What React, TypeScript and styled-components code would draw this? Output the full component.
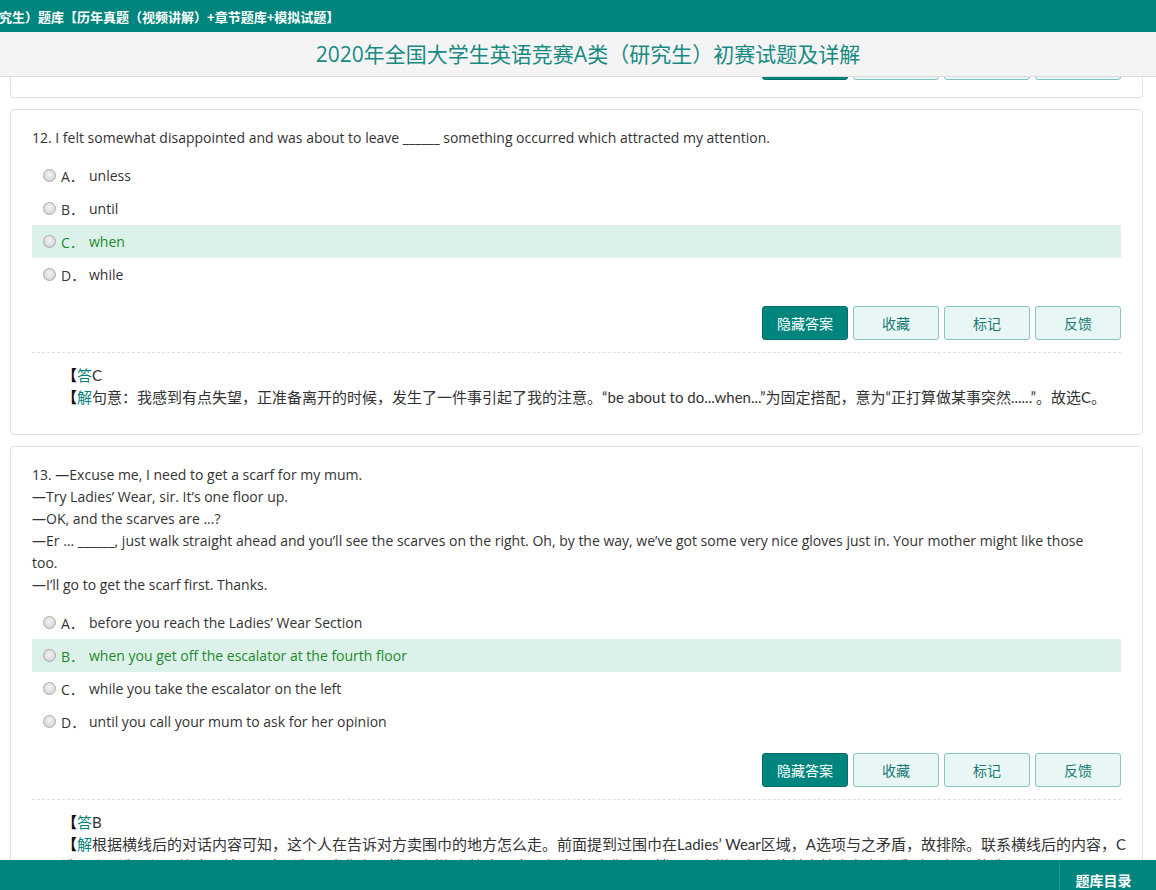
import React from "react"
import styled, { createGlobalStyle } from "styled-components"

const GlobalStyle = createGlobalStyle`
  html, body {
    margin: 0;
    padding: 0;
    background: #fff;
  }
  body {
    font-family: "Open Sans", "Noto Sans CJK SC", sans-serif;
    font-size: 14px;
    color: #333;
  }
`

interface Option {
  key: string
  text: string
}

interface Question {
  id: number
  lines: string[]
  options: Option[]
  answer: string
  analysis: string
}

const questions: Question[] = [
  {
    id: 12,
    lines: [
      "12. I felt somewhat disappointed and was about to leave ______ something occurred which attracted my attention.",
    ],
    options: [
      { key: "A", text: "unless" },
      { key: "B", text: "until" },
      { key: "C", text: "when" },
      { key: "D", text: "while" },
    ],
    answer: "C",
    analysis:
      "句意：我感到有点失望，正准备离开的时候，发生了一件事引起了我的注意。“be about to do...when...”为固定搭配，意为“正打算做某事突然......”。故选C。",
  },
  {
    id: 13,
    lines: [
      "13. —Excuse me, I need to get a scarf for my mum.",
      "—Try Ladies’ Wear, sir. It’s one floor up.",
      "—OK, and the scarves are ...?",
      "—Er ... ______, just walk straight ahead and you’ll see the scarves on the right. Oh, by the way, we’ve got some very nice gloves just in. Your mother might like those too.",
      "—I’ll go to get the scarf first. Thanks.",
    ],
    options: [
      { key: "A", text: "before you reach the Ladies’ Wear Section" },
      { key: "B", text: "when you get off the escalator at the fourth floor" },
      { key: "C", text: "while you take the escalator on the left" },
      { key: "D", text: "until you call your mum to ask for her opinion" },
    ],
    answer: "B",
    analysis:
      "根据横线后的对话内容可知，这个人在告诉对方卖围巾的地方怎么走。前面提到过围巾在Ladies’ Wear区域，A选项与之矛盾，故排除。联系横线后的内容，C选项和D选项都不符合语境，只有B选项“当你在四楼下电梯时”符合题意，句意为“当你在四楼下了电梯，径直往前走就会在右边看到围巾”。故选B。",
  },
]

const ActionButtons: React.FunctionComponent = () => (
  <ButtonRow>
    <ActionButton $primary>隐藏答案</ActionButton>
    <ActionButton>收藏</ActionButton>
    <ActionButton>标记</ActionButton>
    <ActionButton>反馈</ActionButton>
  </ButtonRow>
)

const QuestionCard: React.FunctionComponent<{ q: Question }> = ({ q }) => (
  <Card>
    <Stem>
      {q.lines.map((line, i) => (
        <div key={i}>{line}</div>
      ))}
    </Stem>
    <Options>
      {q.options.map((o) => (
        <OptionRow key={o.key} $correct={o.key === q.answer}>
          <Radio />
          <OptionKey>{o.key}．</OptionKey>
          <span>{o.text}</span>
        </OptionRow>
      ))}
    </Options>
    <ActionButtons />
    <Divider />
    <AnswerBox>
      <div>
        <Mark>【</Mark>
        <MarkLabel>答</MarkLabel>
        {q.answer}
      </div>
      <div>
        <Mark>【</Mark>
        <MarkLabel>解</MarkLabel>
        {q.analysis}
      </div>
    </AnswerBox>
  </Card>
)

const App: React.FunctionComponent = () => (
  <>
    <GlobalStyle />
    <Header>
      <TopBar>
        <TopTitle>究生）题库【历年真题（视频讲解）+章节题库+模拟试题】</TopTitle>
      </TopBar>
      <SubBar>2020年全国大学生英语竞赛A类（研究生）初赛试题及详解</SubBar>
    </Header>
    <List>
      <TailCard>
        <ActionButtons />
      </TailCard>
      {questions.map((q) => (
        <QuestionCard key={q.id} q={q} />
      ))}
    </List>
    <Footer>
      <FooterButton>题库目录</FooterButton>
    </Footer>
  </>
)

const Header = styled.header`
  position: fixed;
  top: 0;
  left: 0;
  right: 0;
  z-index: 10;
`

const TopBar = styled.div`
  height: 32px;
  background: #00857e;
  overflow: hidden;
  display: flex;
  align-items: center;
`

const TopTitle = styled.div`
  margin-left: -1px;
  color: #fff;
  font-size: 13px;
  font-weight: bold;
  white-space: nowrap;
  font-family: "Noto Sans CJK SC", sans-serif;
`

const SubBar = styled.div`
  height: 44px;
  padding-left: 20px;
  background: #f4f4f4;
  border-bottom: 1px solid #dcdcdc;
  color: #168a83;
  font-size: 21px;
  line-height: 44px;
  text-align: center;
`

const List = styled.main`
  display: flex;
  flex-direction: column;
  gap: 11px;
  padding: 46px 13px 60px 10px;
`

const Card = styled.section`
  border: 1px solid #e2e2e2;
  border-radius: 4px;
  padding: 17px 21px 26px;
  background: #fff;
`

const TailCard = styled(Card)`
  padding-top: 0;
  padding-bottom: 17px;
  border-top: none;
  border-radius: 0 0 4px 4px;
`

const Stem = styled.div`
  line-height: 22px;
  padding-right: 12px;
`

const Options = styled.div`
  margin: 10px 0 15px;
`

const OptionRow = styled.div<{ $correct?: boolean }>`
  height: 33px;
  display: flex;
  align-items: center;
  padding-left: 11px;
  background: ${(p) => (p.$correct ? "#dcf1ea" : "transparent")};
  color: ${(p) => (p.$correct ? "#1f8a2b" : "#333")};
`

const Radio = styled.span`
  width: 11px;
  height: 11px;
  border-radius: 50%;
  border: 1px solid #a9a9a9;
  background: radial-gradient(circle at 50% 40%, #f4f4f4 0%, #d8d8d8 70%, #c4c4c4 100%);
  margin-right: 5px;
  flex: none;
`

const OptionKey = styled.span`
  width: 28px;
  flex: none;
`

const ButtonRow = styled.div`
  display: flex;
  justify-content: flex-end;
  gap: 5px;
`

const ActionButton = styled.button<{ $primary?: boolean }>`
  width: 86px;
  height: 34px;
  border-radius: 3px;
  font-family: "Noto Sans CJK SC", sans-serif;
  font-size: 14px;
  cursor: pointer;
  border: 1px solid ${(p) => (p.$primary ? "#006f69" : "#86c4c0")};
  background: ${(p) => (p.$primary ? "#00857e" : "#e8f6f5")};
  color: ${(p) => (p.$primary ? "#fff" : "#1b7a75")};
`

const Divider = styled.hr`
  margin: 12px 0 0;
  border: none;
  border-top: 1px dashed #e0e0e0;
`

const AnswerBox = styled.div`
  padding: 11px 0 0 30px;
  margin-right: -8px;
  line-height: 22px;
  font-size: 15px;
  font-family: "Lato", "Noto Sans CJK SC", sans-serif;
`

const Mark = styled.span`
  color: #111;
  font-weight: 900;
`

const MarkLabel = styled.span`
  color: #00807a;
`

const Footer = styled.footer`
  position: fixed;
  left: 0;
  right: 0;
  bottom: 0;
  height: 30px;
  background: #00857e;
  display: flex;
  justify-content: flex-end;
  z-index: 10;
`

const FooterButton = styled.div`
  width: 87px;
  margin-right: 9px;
  border-left: 1px solid #1f9690;
  color: #fff;
  font-weight: bold;
  font-size: 14px;
  font-family: "Noto Sans CJK SC", sans-serif;
  text-align: center;
  padding-top: 10px;
  line-height: 20px;
`

export default App
